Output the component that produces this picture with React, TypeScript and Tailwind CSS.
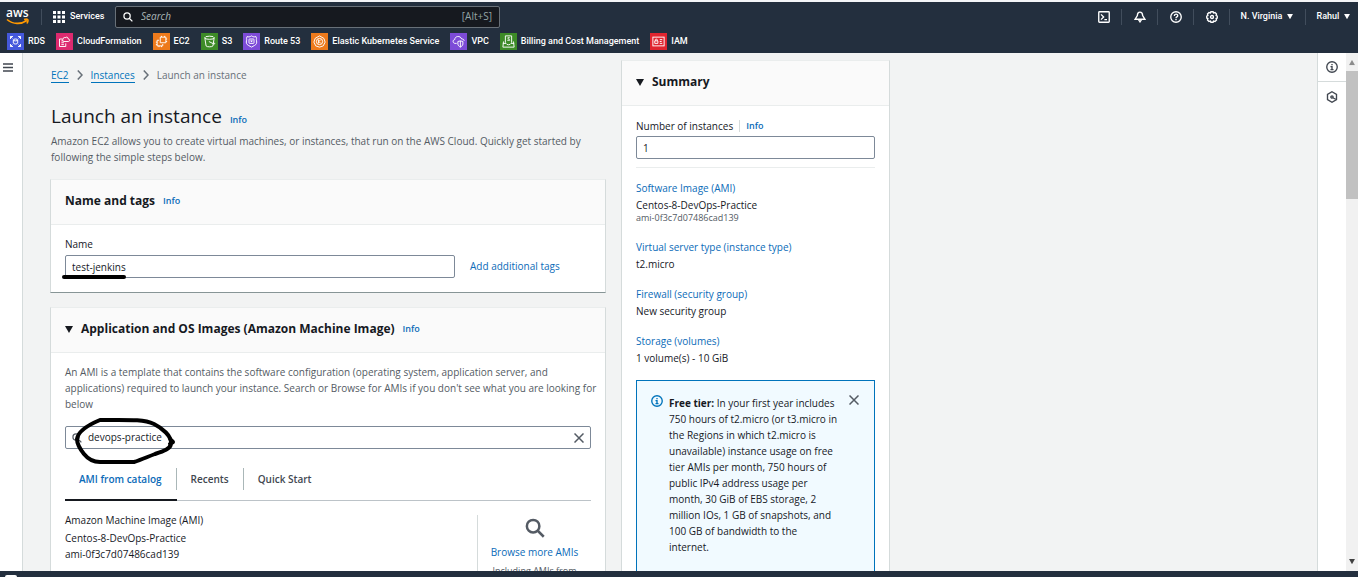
import type { ReactNode } from "react";

type Service = { name: string; tile: string; icon: ReactNode };

// Favourites shown under the top bar
const services: Service[] = [
  {
    name: "RDS",
    tile: "bg-[#4458dc]",
    icon: (
      <>
        <ellipse cx="12" cy="9.5" rx="3.5" ry="1.5" />
        <path d="M8.500 9.500v5c0 2 7 2 7 0v-5M4 8V4h4M16 4h4v4M20 16v4h-4M8 20H4v-4M4 4l3 3M20 4l-3 3M4 20l3-3M20 20l-3-3" />
      </>
    ),
  },
  {
    name: "CloudFormation",
    tile: "bg-[#dd2a6f]",
    icon: (
      <path d="M9 8H4v12h10v-5M7 11h3M7 14h4M7 17h4M11 12h7c3 0 3-4 0-4 0-3-3-4-5-2-2-1-3 0-3 2-2 1-1 4 1 4z" />
    ),
  },
  {
    name: "EC2",
    tile: "bg-[#ed7a1c]",
    icon: (
      <path d="M10 5h9v9h-9zM8 10H5v9h9v-3M12 3v2M17 3v2M19 8h2M19 12h2M3 13h2M3 17h2M8 19v2M12 19v2" />
    ),
  },
  {
    name: "S3",
    tile: "bg-[#3d8b27]",
    icon: (
      <>
        <ellipse cx="12" cy="6" rx="7.500" ry="2.500" />
        <path d="M4.500 6l2 13c1 2 10 2 11 0l2-13M11 12l8 4c2 0 2-1-1-3" />
      </>
    ),
  },
  {
    name: "Route 53",
    tile: "bg-[#7d4bd8]",
    icon: (
      <>
        <path d="M5 4c2 1 4 1 7-1 3 2 5 2 7 1l1 3c-1 3 1 5 0 8-1 3-5 4-8 6-3-2-7-3-8-6-1-3 1-5 0-8z" />
        <rect x="8" y="8" width="8" height="7" rx="1" />
        <path d="M10 11h4M12 11v2" />
      </>
    ),
  },
  {
    name: "Elastic Kubernetes Service",
    tile: "bg-[#ed7a1c]",
    icon: (
      <>
        <path d="M12 3l7 4 2 6-3 6-6 2-6-2-3-6 2-6z" />
        <circle cx="12" cy="12" r="5" />
        <path d="M10.500 9v6M14 9l-3 3 3 3" />
      </>
    ),
  },
  {
    name: "VPC",
    tile: "bg-[#7d4bd8]",
    icon: (
      <path d="M9 15H6c-4-1-3-6 0-6 0-6 9-7 11-1 3 0 4 1 4 3M15 11l4 1v4c0 2-2 4-4 5-2-1-4-3-4-5v-4zM15 11v10" />
    ),
  },
  {
    name: "Billing and Cost Management",
    tile: "bg-[#3d8b27]",
    icon: (
      <path d="M7 14V3h10v11M4 12l-1 9h18l-1-9M3 15h5c1 3 7 3 8 0h5M14 6h-3c-1 2 3 2 3 4h-4" />
    ),
  },
  {
    name: "IAM",
    tile: "bg-[#e0252f]",
    icon: (
      <>
        <rect x="3" y="5" width="18" height="14" />
        <path d="M6 11h5v4H6zM7 11V9c0-1 3-1 3 0v2M14 9h4M14 12h3M14 15h4" />
      </>
    ),
  },
];

const summaryItems = [
  { label: "Virtual server type (instance type)", value: "t2.micro" },
  { label: "Firewall (security group)", value: "New security group" },
  { label: "Storage (volumes)", value: "1 volume(s) - 10 GiB" },
];

function Caret({ className = "" }: { className?: string }) {
  return (
    <svg viewBox="0 0 8 7" className={`h-[7px] w-2 shrink-0 ${className}`} fill="currentColor" aria-hidden="true">
      <path d="M0 0h8L4 7z" />
    </svg>
  );
}

function SearchIcon({ className = "" }: { className?: string }) {
  return (
    <svg viewBox="0 0 16 16" className={`shrink-0 ${className}`} fill="none" stroke="currentColor" strokeWidth="2" aria-hidden="true">
      <circle cx="6.500" cy="6.500" r="5" />
      <path d="M10 10l5 5" />
    </svg>
  );
}

function CloseIcon() {
  return (
    <svg viewBox="0 0 10 10" className="size-[10px]" fill="none" stroke="currentColor" strokeWidth="1.500" aria-hidden="true">
      <path d="M.5.5l9 9M9.500.5l-9 9" />
    </svg>
  );
}

function InfoIcon() {
  return (
    <svg viewBox="0 0 16 16" className="size-3" fill="none" stroke="currentColor" strokeWidth="1.800" aria-hidden="true">
      <circle cx="8" cy="8" r="7" />
      <path d="M8 4v1.800M6 7.500h2v4M6 11.500h4" />
    </svg>
  );
}

function Chevron() {
  return (
    <svg viewBox="0 0 6 10" className="h-[10px] w-[6px]" fill="none" stroke="#687078" strokeWidth="1.500" aria-hidden="true">
      <path d="M.8.5L5 5 .8 9.500" />
    </svg>
  );
}

function Info() {
  return (
    <a href="#info" className="text-[9px] leading-4 font-semibold text-[#0b6bb8]">
      Info
    </a>
  );
}

function TopButton({ label, children }: { label: string; children: ReactNode }) {
  return (
    <button aria-label={label} className="flex h-4 w-9 items-center justify-center border-r border-[#414d5c]">
      <svg viewBox="0 0 16 16" className="size-3" fill="none" stroke="currentColor" strokeWidth="1.800" aria-hidden="true">
        {children}
      </svg>
    </button>
  );
}

function TopBar() {
  return (
    <header className="shrink-0 border-t-2 border-[#f4f5f7] bg-[#232f3e] text-white">
      <div className="flex h-[29px] items-center">
        <a href="#home" aria-label="AWS home" className="flex w-[42px] flex-col border-r border-[#414d5c] pl-[6px]">
          <span className="h-[9px] text-[12px] leading-[8px] font-semibold">aws</span>
          <svg viewBox="0 0 24 7" className="h-[7px] w-6" fill="none" stroke="#ff9900" strokeWidth="1.600" aria-hidden="true">
            <path d="M1 1.500c6 5 14 5 20 1M18 1.500c4-1 5 0 3 4" />
          </svg>
        </a>
        <button className="flex w-[73px] items-center gap-[5px] pl-[11px] font-[Roboto,sans-serif] text-[9px] font-medium">
          <svg viewBox="0 0 12 12" className="size-3" fill="currentColor" aria-hidden="true">
            <path d="M0 0h3v3H0zM4.500 0h3v3h-3zM9 0h3v3H9zM0 4.500h3v3H0zM4.500 4.500h3v3h-3zM9 4.500h3v3H9zM0 9h3v3H0zM4.500 9h3v3h-3zM9 9h3v3H9z" />
          </svg>
          Services
        </button>
        <label className="flex h-[22px] w-[385px] items-center gap-2 rounded-xs border border-[#687078] bg-[#16191f] px-[7px]">
          <SearchIcon className="size-[10px]" />
          <input
            type="search"
            aria-label="Search"
            placeholder="Search"
            className="min-w-0 flex-1 bg-transparent text-[10px] outline-none placeholder:text-[#aab7b8] placeholder:italic"
          />
          <span className="text-[10px] text-[#95a5a6]">[Alt+S]</span>
        </label>
        <div className="ml-auto flex items-center font-[Roboto,sans-serif] text-[9px] font-medium">
          <TopButton label="CloudShell">
            <rect x="1" y="1" width="14" height="14" rx="1" />
            <path d="M4 4.500L7.500 8 4 11.500M8.500 11.500H12" />
          </TopButton>
          <TopButton label="Notifications">
            <path d="M8 1.500c-2 0-3.500 1.500-3.500 4.500L1.500 11h13l-3-5c0-3-1.500-4.500-3.500-4.500zM6 11.500l2 3 2-3" />
          </TopButton>
          <TopButton label="Help">
            <circle cx="8" cy="8" r="7" />
            <path d="M5.800 6.500c0-3 4.500-3 4.500-.3C10.300 8 8 7.500 8 9.500M8 10.800v1.500" />
          </TopButton>
          <TopButton label="Settings">
            <path d="M6.500 1h3l.5 1.500 2-.5 2 2-.5 2 1.500.5v3l-1.500.5.5 2-2 2-2-.5-.5 1.500h-3L6 13.500l-2 .5-2-2 .5-2L1 9.500v-3L2.500 6 2 4l2-2 2 .5z" />
            <circle cx="8" cy="8" r="2" />
          </TopButton>
          <button className="flex h-4 w-19 items-center justify-center gap-1 border-r border-[#414d5c]">
            N. Virginia <Caret className="scale-75" />
          </button>
          <button className="flex h-4 w-13 items-center justify-center gap-1 pl-1">
            Rahul <Caret className="scale-75" />
          </button>
        </div>
      </div>
      <nav className="flex h-[22px] items-center gap-[11px] pb-px pl-[7px] font-[Roboto,sans-serif] text-[9px] font-medium whitespace-nowrap">
        {services.map((s) => (
          <a key={s.name} href="#service" className="flex items-center gap-1">
            <span className={`flex size-[17px] items-center justify-center ${s.tile}`}>
              <svg viewBox="0 0 24 24" className="size-[15px]" fill="none" stroke="currentColor" strokeWidth="1.500" aria-hidden="true">
                {s.icon}
              </svg>
            </span>
            {s.name}
          </a>
        ))}
      </nav>
    </header>
  );
}

function Card({ title, caret, info, children, className = "" }: {
  title: string;
  caret?: boolean;
  info?: boolean;
  children: ReactNode;
  className?: string;
}) {
  return (
    <section className={`border border-[#d5dbdb] border-t-[#eaeded] bg-white ${className}`}>
      <div className="flex h-[45px] items-center gap-2 border-b border-[#eaeded] bg-[#fafafa] px-[14px] pb-[2px]">
        {caret && <Caret />}
        <h2 className="text-[12px] leading-5 font-bold text-[#16191f]">{title}</h2>
        {info && <Info />}
      </div>
      {children}
    </section>
  );
}

function NameCard() {
  return (
    <Card title="Name and tags" info className="border-b-[#879596]">
      <div className="px-[14px] pt-[11px] pb-[14px]">
        <label htmlFor="name" className="block leading-4">
          Name
        </label>
        <div className="mt-[3px] flex items-center gap-[15px]">
          <div className="relative w-[390px]">
            <input
              id="name"
              defaultValue="test-jenkins"
              className="block h-[23px] w-full rounded-xs border border-[#7d8998] px-[6px] outline-none"
            />
            {/* marker stroke under the value */}
            <span className="absolute -bottom-px -left-[3px] h-1 w-16 rounded-full bg-black" />
          </div>
          <a href="#tags" className="text-[#0b6bb8]">
            Add additional tags
          </a>
        </div>
      </div>
    </Card>
  );
}

function ImagesCard() {
  return (
    <Card title="Application and OS Images (Amazon Machine Image)" caret info>
      <div className="px-[14px] pt-[11px] pb-10">
        <p className="leading-4 whitespace-nowrap text-[#545b64]">
          An AMI is a template that contains the software configuration (operating system, application server, and
          <br />
          applications) required to launch your instance. Search or Browse for AMIs if you don't see what you are looking for
          <br />
          below
        </p>
        <div className="relative mt-[14px] flex h-[23px] items-center gap-[6px] rounded-xs border border-[#7d8998] px-[6px] text-[#545b64]">
          <SearchIcon className="size-[10px]" />
          <input
            aria-label="Search images"
            defaultValue="devops-practice"
            className="min-w-0 flex-1 text-[#16191f] outline-none"
          />
          <button aria-label="Clear">
            <CloseIcon />
          </button>
          {/* hand-drawn ring round the search term */}
          <svg viewBox="0 0 104 50" className="pointer-events-none absolute -top-[10px] left-2 h-[50px] w-26" fill="none" stroke="#000" strokeWidth="4" strokeLinecap="round" strokeLinejoin="round" aria-hidden="true">
            <path d="M26 3C14 8 4 15 3 22c0 5 3 10 7 15 4 5 9 8 16 8h34c7-2 13-5 21-8 9-3 15-5 16-10 1-8-9-16-17-20C69 2 54 3 26 3zM96 22l3 3-3 2" />
          </svg>
        </div>
        <div role="tablist" className="mt-[19px] flex h-[33px] border-b border-[#bcc3c8] leading-[22px] font-semibold text-[#414750]">
          <button role="tab" aria-selected="true" className="-mb-px h-[33px] border-b-2 border-[#16191f] pb-[9px] text-[#0b6bb8]">
            <span className="block border-r border-[#aab7b8] px-[14px]">AMI from catalog</span>
          </button>
          <button role="tab" aria-selected="false" className="h-[22px] border-r border-[#aab7b8] px-[14px]">
            Recents
          </button>
          <button role="tab" aria-selected="false" className="h-[22px] px-[14px]">
            Quick Start
          </button>
        </div>
        <div className="flex pt-[14px]">
          <div className="-mt-[3px] flex-1 leading-4">
            <p className="mb-[2px]">Amazon Machine Image (AMI)</p>
            <p>Centos-8-DevOps-Practice</p>
            <p>ami-0f3c7d07486cad139</p>
          </div>
          <div className="flex w-[114px] flex-col items-center border-l border-[#d5dbdb] pt-[3px] leading-4">
            <SearchIcon className="size-5 text-[#545b64]" />
            <a href="#browse" className="mt-[6px] text-[#0b6bb8]">
              Browse more AMIs
            </a>
            <p className="mt-[3px] text-[9px] text-[#545b64]">Including AMIs from</p>
          </div>
        </div>
      </div>
    </Card>
  );
}

function Summary() {
  return (
    <Card title="Summary" caret className="w-[269px] shrink-0">
      <div className="px-[14px] pt-3 leading-4">
        <div className="flex items-center">
          <label htmlFor="count">Number of instances</label>
          <span className="mx-[6px] h-3 border-l border-[#d5dbdb]" />
          <Info />
        </div>
        <input
          id="count"
          defaultValue="1"
          className="mt-[2px] block h-[23px] w-full rounded-xs border border-[#7d8998] px-[6px] outline-none"
        />
        <hr className="mt-2 border-[#eaeded]" />
        <a href="#ami" className="mt-3 block text-[#0b6bb8]">
          Software Image (AMI)
        </a>
        <p className="mt-px">Centos-8-DevOps-Practice</p>
        <p className="text-[9px] leading-[10px] text-[#545b64]">ami-0f3c7d07486cad139</p>
        <div className="mt-4 space-y-[14px]">
          {summaryItems.map((item) => (
            <div key={item.label}>
              <a href="#edit" className="block text-[#0b6bb8]">
                {item.label}
              </a>
              <p className="mt-px">{item.value}</p>
            </div>
          ))}
        </div>
        <div className="mt-[14px] flex h-60 items-start border border-[#0073bb] bg-[#f1faff] pt-[14px] pr-[15px] pl-[14px]">
          <span className="text-[#0073bb]">
            <InfoIcon />
          </span>
          <p className="flex-1 pl-[6px] whitespace-nowrap">
            <b className="font-bold">Free tier:</b> In your first year includes
            <br />
            750 hours of t2.micro (or t3.micro in
            <br />
            the Regions in which t2.micro is
            <br />
            unavailable) instance usage on free
            <br />
            tier AMIs per month, 750 hours of
            <br />
            public IPv4 address usage per
            <br />
            month, 30 GiB of EBS storage, 2
            <br />
            million IOs, 1 GB of snapshots, and
            <br />
            100 GB of bandwidth to the
            <br />
            internet.
          </p>
          <button aria-label="Dismiss" className="text-[#545b64]">
            <CloseIcon />
          </button>
        </div>
      </div>
    </Card>
  );
}

export default function App() {
  return (
    <div className="flex h-screen flex-col overflow-hidden bg-[#f2f3f3] font-['Open_Sans','Noto_Sans',sans-serif] text-[10px] text-[#16191f]">
      <TopBar />
      <div className="flex min-h-0 flex-1">
        <aside className="w-[23px] shrink-0 border-r border-[#d5dbdb] bg-white pt-[10px] pl-[3px]">
          <button aria-label="Open navigation" className="block text-[#414750]">
            <svg viewBox="0 0 10 9" className="h-[9px] w-[10px]" stroke="currentColor" strokeWidth="1.500" aria-hidden="true">
              <path d="M0 1h10M0 4.500h10M0 8h10" />
            </svg>
          </button>
        </aside>
        <main className="flex min-w-0 flex-1 items-start gap-[15px] overflow-hidden pl-[27px]">
          <div className="w-[556px] shrink-0 pt-[14px]">
            <div className="pl-px">
              <nav className="flex items-center gap-2 leading-4">
                <a href="#ec2" className="border-b border-[#0073bb] leading-[14px] text-[#0073bb]">
                  EC2
                </a>
                <Chevron />
                <a href="#instances" className="border-b border-[#0073bb] leading-[14px] text-[#0073bb]">
                  Instances
                </a>
                <Chevron />
                <span className="font-medium text-[#687078]">Launch an instance</span>
              </nav>
              <div className="mt-[19px] flex items-baseline gap-2">
                <h1 className="text-[19px] leading-7">Launch an instance</h1>
                <Info />
              </div>
              <p className="mt-[3px] mb-[14px] leading-4 whitespace-nowrap text-[#545b64]">
                Amazon EC2 allows you to create virtual machines, or instances, that run on the AWS Cloud. Quickly get started by
                <br />
                following the simple steps below.
              </p>
            </div>
            <NameCard />
            <div className="h-[14px]" />
            <ImagesCard />
          </div>
          <div className="pt-[7px]">
            <Summary />
          </div>
        </main>
        <aside className="flex w-[29px] shrink-0 flex-col border-l border-[#d5dbdb] bg-white text-[#414750]">
          <button aria-label="Info panel" className="flex h-[29px] items-center justify-center border-b border-[#d5dbdb]">
            <InfoIcon />
          </button>
          <button aria-label="Tutorials" className="flex h-[29px] items-center justify-center">
            <svg viewBox="0 0 16 16" className="size-3" fill="none" stroke="currentColor" strokeWidth="1.800" aria-hidden="true">
              <path d="M8 1l6 3.500v7L8 15l-6-3.500v-7z" />
              <circle cx="8" cy="8" r="1.500" />
              <path d="M9 9l4 2" />
            </svg>
          </button>
        </aside>
        <div className="flex w-3 shrink-0 flex-col items-center bg-[#f1f1f1] py-[6px]">
          <Caret className="rotate-180 scale-75 text-[#8b8b8b]" />
          <div className="mt-[5px] h-32 w-full bg-[#c1c1c1]" />
          <Caret className="mt-auto scale-75 text-[#404040]" />
        </div>
      </div>
      <footer className="h-[6px] shrink-0 bg-[#232f3e] pt-1 pl-[5px]">
        <div className="h-[2px] w-3 rounded-t-xs bg-white" />
      </footer>
    </div>
  );
}
